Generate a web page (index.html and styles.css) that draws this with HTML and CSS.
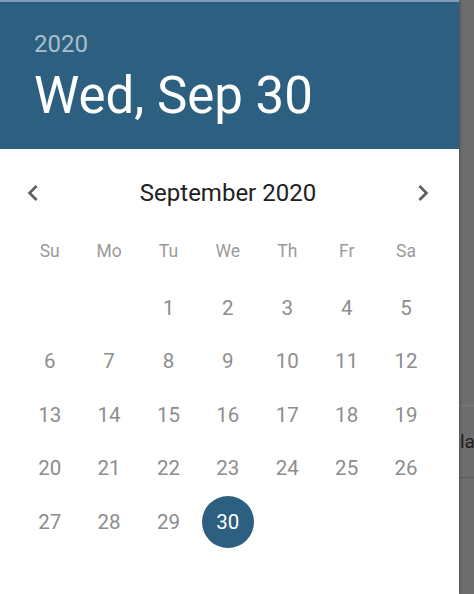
FILE: index.html
```html
<!DOCTYPE html>
<html lang="en">
  <head>
    <meta charset="UTF-8" />
    <meta name="viewport" content="width=device-width, initial-scale=1.0" />
    <title>Date Picker</title>
    <link rel="stylesheet" href="styles.css">
  </head>
  <body>
    <div class="picker">
      <div class="picker-header">
        <div class="picker-year">2020</div>
        <div class="picker-date">Wed, Sep 30</div>
      </div>

      <div class="month-nav">
        <button class="nav-btn" aria-label="Previous month">
          <svg width="32" height="32" viewBox="0 0 24 24">
            <path d="M15.41 7.41 14 6l-6 6 6 6 1.41-1.41L10.83 12z" />
          </svg>
        </button>
        <div class="month-title">September 2020</div>
        <button class="nav-btn" aria-label="Next month">
          <svg width="32" height="32" viewBox="0 0 24 24">
            <path d="M10 6 8.59 7.41 13.17 12l-4.58 4.59L10 18l6-6z" />
          </svg>
        </button>
      </div>

      <div class="weekdays">
        <span>Su</span><span>Mo</span><span>Tu</span><span>We</span><span>Th</span><span>Fr</span><span>Sa</span>
      </div>

      <div class="days" id="days"></div>
    </div>

    <div class="backdrop">
      <div class="backdrop-row"><span>la</span></div>
    </div>

    <script>
      // September 2020 starts on a Tuesday
      const daysEl = document.getElementById("days");
      const firstWeekday = 2;
      const daysInMonth = 30;
      const selected = 30;

      for (let i = 0; i < firstWeekday; i++) {
        daysEl.appendChild(document.createElement("span"));
      }

      for (let d = 1; d <= daysInMonth; d++) {
        const cell = document.createElement("span");
        const btn = document.createElement("button");
        btn.className = "day";
        if (d === selected) btn.classList.add("selected");
        btn.textContent = d;
        cell.appendChild(btn);
        daysEl.appendChild(cell);
      }
    </script>
  </body>
</html>
```

FILE: styles.css
```css
:root {
  --primary: #2c5f80;
  --text: #212121;
  --muted: #8d8d8d;
  --weekday: #9a9a9a;
  --backdrop: #6d6d6d;
}

html,
body {
  height: 100%;
}

body {
  margin: 0;
  display: flex;
  font-family: Roboto, "Noto Sans", Arial, sans-serif;
  background-color: var(--backdrop);
  overflow: hidden;
}

.picker {
  width: 459px;
  flex-shrink: 0;
  background-color: white;
  box-shadow: 1px 0 3px rgba(0, 0, 0, 0.25);
  position: relative;
  z-index: 2;
}

.picker-header {
  background-color: var(--primary);
  border-top: 2px solid #7f9db6;
  padding: 28px 34px 23px;
  color: white;
}

.picker-year {
  font-size: 24px;
  line-height: 28px;
  color: rgba(255, 255, 255, 0.6);
}

.picker-date {
  font-size: 51px;
  line-height: 60px;
  margin-top: 8px;
}

.month-nav {
  display: flex;
  align-items: center;
  justify-content: space-between;
  height: 48px;
  margin-top: 20px;
  padding: 0 20px 0 17px;
}

.nav-btn {
  background: none;
  border: none;
  padding: 0;
  width: 32px;
  height: 32px;
  cursor: pointer;
}

.nav-btn svg {
  display: block;
  fill: #5f5f5f;
}

.month-title {
  font-size: 24px;
  color: var(--text);
}

.weekdays,
.days {
  display: grid;
  grid-template-columns: repeat(7, 59.4px);
  padding-left: 20px;
}

.weekdays {
  height: 40px;
  margin-top: 14px;
  align-items: center;
  font-size: 17.5px;
  color: var(--weekday);
}

.weekdays span {
  text-align: center;
}

.days {
  margin-top: 10px;
  grid-auto-rows: 53.5px;
}

.days span {
  display: flex;
  align-items: center;
  justify-content: center;
}

.day {
  width: 52px;
  height: 52px;
  border: none;
  border-radius: 50%;
  background: none;
  padding: 0;
  font-family: inherit;
  font-size: 20.5px;
  color: var(--muted);
  cursor: pointer;
}

.day.selected {
  background-color: var(--primary);
  color: white;
}

.backdrop {
  flex: 1;
  overflow: hidden;
}

.backdrop-row {
  margin-top: 405px;
  height: 71px;
  border-top: 1px solid #7a7a7a;
  border-bottom: 1px solid #5e5e5e;
  display: flex;
  align-items: center;
  font-size: 19px;
  color: #1f1f1f;
  white-space: nowrap;
}

.backdrop-row span {
  padding-left: 1px;
}
```
